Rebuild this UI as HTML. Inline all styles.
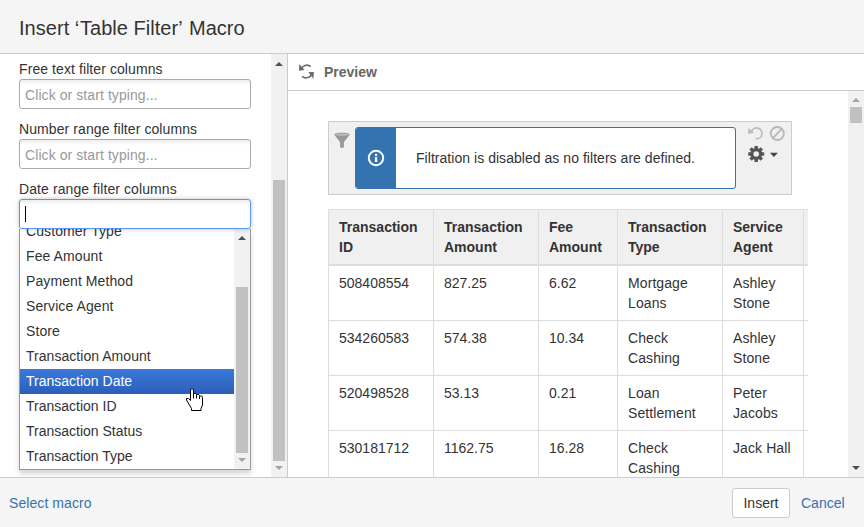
<!DOCTYPE html>
<html><head><meta charset="utf-8">
<style>
*{box-sizing:border-box;margin:0;padding:0}
html,body{width:864px;height:527px;overflow:hidden;background:#fff;font-family:"Liberation Sans",Arial,sans-serif;font-size:14px;color:#333}
#hdr{position:absolute;left:0;top:0;width:864px;height:54px;background:#f5f5f5;border-bottom:1px solid #ccc}
#hdr h2{letter-spacing:.035px;position:absolute;left:19px;top:16px;font-size:20px;font-weight:normal;color:#333;line-height:24px;white-space:nowrap}
#left{position:absolute;left:0;top:54px;width:287px;height:423px;background:#fff;overflow:hidden}
.sb{position:absolute;background:#f1f1f1}
.sb .thumb{position:absolute;left:2px;width:12px;background:#c1c1c1}
.au,.ad{position:absolute;left:4px;width:0;height:0;border-left:4px solid transparent;border-right:4px solid transparent}
.au{border-bottom:4px solid #505050}
.ad{border-top:4px solid #505050}
.au.dis{border-bottom-color:#a3a3a3}
.ad.dis{border-top-color:#a3a3a3}
label.l{position:absolute;left:19px;letter-spacing:.085px;font-size:14px;color:#333;line-height:20px;white-space:nowrap}
.inp{letter-spacing:.08px;position:absolute;left:19px;width:232px;height:30px;border:1px solid #aaa;border-radius:3px;background:linear-gradient(#eee 1%,#fff 18%);font-size:14px;color:#999;line-height:30px;padding-left:5px}
#right{position:absolute;left:287px;top:54px;width:577px;height:423px;border-left:1px solid #ccc;background:#fff;overflow:hidden}
#pvh{position:absolute;left:0;top:0;width:576px;height:37px;border-bottom:1px solid #ccc}
#pvh span{position:absolute;left:36px;top:8px;font-weight:bold;color:#666;font-size:14px;line-height:20px}
#ftr{position:absolute;left:0;top:477px;width:864px;height:50px;background:#f5f5f5;border-top:1px solid #ccc}
#ftr a{position:absolute;color:#3572b0;font-size:14px;line-height:20px;text-decoration:none}
#ins{position:absolute;left:732px;top:10px;width:58px;height:30px;border:1px solid #ccc;border-radius:3px;background:#fff;color:#333;font-size:14px;line-height:28px;text-align:center}
#dd{position:absolute;left:19px;top:175px;width:232px;height:241px;border:1px solid #999;border-top:none;background:#fff;overflow:hidden}
#ddsh{position:absolute;left:19px;top:175px;width:232px;height:241px;box-shadow:0 4px 5px rgba(0,0,0,.16)}
#dd .it{letter-spacing:.09px;position:absolute;left:0;width:214px;height:25px;line-height:25px;padding-left:6px;font-size:14px;color:#333;white-space:nowrap}
#dd .sel{background:linear-gradient(#3b79da,#2b5fb8);color:#fff}
#tblwrap{position:absolute;left:40px;top:155px;width:480px;height:268px;overflow:hidden}
table{border-collapse:collapse;table-layout:fixed;width:581px;font-size:14px;color:#333}
th,td{border:1px solid #ddd;padding:7px 10px;text-align:left;vertical-align:top;line-height:20px;height:55px;overflow:hidden;white-space:nowrap}
td:nth-child(n+4){letter-spacing:.09px}
th{background:#f0f0f0;font-weight:bold;border-bottom:2px solid #ddd;height:55px}
</style></head><body>
<div id="hdr"><h2>Insert <span style="letter-spacing:.7px">‘</span>Table Filter<span style="letter-spacing:.7px">’</span> Macro</h2></div>
<div id="left">
 <label class="l" style="top:5px">Free text filter columns</label>
 <div class="inp" style="top:25px">Click or start typing...</div>
 <label class="l" style="top:65px">Number range filter columns</label>
 <div class="inp" style="top:85px">Click or start typing...</div>
 <label class="l" style="top:125px">Date range filter columns</label>
 <div id="ddsh"></div>
 <div id="dd">
  <div class="it" style="top:-10px">Customer Type</div>
  <div class="it" style="top:15px">Fee Amount</div>
  <div class="it" style="top:40px">Payment Method</div>
  <div class="it" style="top:65px">Service Agent</div>
  <div class="it" style="top:90px">Store</div>
  <div class="it" style="top:115px;letter-spacing:.04px">Transaction Amount</div>
  <div class="it sel" style="top:140px;letter-spacing:0">Transaction Date</div>
  <div class="it" style="top:165px;letter-spacing:0">Transaction ID</div>
  <div class="it" style="top:190px;letter-spacing:0">Transaction Status</div>
  <div class="it" style="top:215px;letter-spacing:0">Transaction Type</div>
  <div class="sb" style="left:214px;top:0;width:16px;height:240px"><div class="au" style="top:7px"></div><div class="thumb" style="top:58px;height:166px"></div><div class="ad dis" style="top:229px"></div></div>
 </div>
 <div class="inp" style="top:145px;border-color:#5795f6;box-shadow:0 0 4px rgba(0,0,0,.25)"><div style="position:absolute;left:5px;top:6px;width:1px;height:16px;background:#000"></div></div>
 <div class="sb" style="left:271px;top:0;width:16px;height:423px"><div class="au" style="top:8px"></div><div class="thumb" style="top:126px;height:281px"></div><div class="ad dis" style="top:412px"></div></div>
</div>
<div id="right">
 <div id="pvh">
  <svg style="position:absolute;left:9px;top:8px" width="20" height="20" viewBox="0 0 20 20"><g fill="none" stroke="#6b6b6b" stroke-width="1.7"><path d="M3.9 7.4A6.3 6.3 0 0 1 13.7 4.5"/><path d="M5 14.3A6.3 6.3 0 0 0 15 11.4"/></g><path d="M2.3 2.1L2 8.7L7.6 8Z" fill="#6b6b6b"/><path d="M11.3 10.1H16.9L16.4 16.7Z" fill="#6b6b6b"/></svg>
  <span>Preview</span></div>
 <div class="sb" style="left:560px;top:37px;width:16px;height:386px"><div class="au dis" style="top:7px"></div><div class="thumb" style="top:16px;height:16px"></div><div class="ad" style="top:375px"></div></div>
 <div id="tf" style="position:absolute;left:40px;top:67px;width:464px;height:74px;background:#f0f0f0;border:1px solid #ccc"></div>
 <svg style="position:absolute;left:45px;top:78px" width="18" height="17" viewBox="0 0 18 17"><path d="M1.2 2.6C1.2 1.4 4.6 0.8 9 0.8S16.8 1.4 16.8 2.6L10.9 10.3V15.2Q9 16.8 7.1 15.2V10.3Z" fill="#999"/><ellipse cx="9" cy="2.6" rx="6.8" ry="1.1" fill="#bbb"/></svg>
 <div id="msg" style="position:absolute;left:67px;top:73px;width:381px;height:62px;background:#fff;border:1px solid #3572b0;border-radius:3px;overflow:hidden"><div style="position:absolute;left:0;top:0;width:40px;height:60px;background:#3572b0"></div>
  <svg style="position:absolute;left:11.4px;top:21px" width="18" height="18" viewBox="0 0 18 18"><circle cx="9" cy="9" r="7.2" fill="none" stroke="#fff" stroke-width="2"/><rect x="7.9" y="8" width="2.3" height="5" fill="#fff"/><rect x="7.9" y="4.8" width="2.3" height="2.2" fill="#fff"/></svg>
  <span style="position:absolute;left:60px;top:20px;line-height:20px;font-size:14px;white-space:nowrap;letter-spacing:.04px">Filtration is disabled as no filters are defined.</span></div>
 <svg style="position:absolute;left:458px;top:71px" width="42" height="40" viewBox="0 0 42 40">
  <path d="M5.5 6.6A5.4 5.4 0 1 1 9.7 13.7" fill="none" stroke="#bbb" stroke-width="1.7"/><path d="M2.4 2.9L2.1 9L7.9 7.8Z" fill="#bbb"/>
  <g fill="none" stroke="#b8b8b8" stroke-width="1.9"><circle cx="31.3" cy="8.5" r="6.5"/><path d="M26.9 13.2L35.7 3.8"/></g>
  <g transform="translate(10.2 29)"><circle r="4.4" fill="none" stroke="#555" stroke-width="3.2"/><g fill="#555"><rect x="-1.7" y="-8" width="3.4" height="4"/><rect x="-1.7" y="4" width="3.4" height="4"/><rect x="-8" y="-1.7" width="4" height="3.4"/><rect x="4" y="-1.7" width="4" height="3.4"/><g transform="rotate(45)"><rect x="-1.7" y="-8" width="3.4" height="4"/><rect x="-1.7" y="4" width="3.4" height="4"/><rect x="-8" y="-1.7" width="4" height="3.4"/><rect x="4" y="-1.7" width="4" height="3.4"/></g></g></g>
  <path d="M23.9 27.8H31.9L27.9 32Z" fill="#444"/>
 </svg>
 <div id="tblwrap"><table>
  <colgroup><col style="width:105px"><col style="width:105px"><col style="width:79px"><col style="width:105px"><col style="width:81px"><col style="width:106px"></colgroup>
  <tr><th>Transaction<br>ID</th><th>Transaction<br>Amount</th><th>Fee<br>Amount</th><th>Transaction<br>Type</th><th>Service<br>Agent</th><th></th></tr>
  <tr><td>508408554</td><td>827.25</td><td>6.62</td><td>Mortgage<br>Loans</td><td>Ashley<br>Stone</td><td></td></tr>
  <tr><td>534260583</td><td>574.38</td><td>10.34</td><td>Check<br>Cashing</td><td>Ashley<br>Stone</td><td></td></tr>
  <tr><td>520498528</td><td>53.13</td><td>0.21</td><td>Loan<br>Settlement</td><td>Peter<br>Jacobs</td><td></td></tr>
  <tr><td>530181712</td><td>1162.75</td><td>16.28</td><td>Check<br>Cashing</td><td>Jack Hall</td><td></td></tr>
 </table></div>
</div>
<svg style="position:absolute;left:184px;top:386.5px" width="22" height="26" viewBox="184 386 22 26"><path d="M190.5 388.8Q190.5 388 191.3 388H192.7Q193.5 388 193.5 388.8V393L194.2 392.5H195.8L196.5 393.3V393.8L197.2 393.5H198.8L199.5 394.5V395.3L200.2 395H201.8L202.5 396.5V404L201 407.5V409.5H191.5V407.5L186.5 399V397.5H188.5L190.5 399.5Z" fill="#fff" stroke="#000" stroke-width="1" stroke-linejoin="round"/><path d="M193.5 393V397.5M196.5 393.8V397.5M199.5 395.3V398" stroke="#000" stroke-width="1" fill="none"/></svg>
<div id="ftr"><a style="left:9px;top:15px;letter-spacing:.08px">Select macro</a><div id="ins">Insert</div><a style="left:801px;top:15px">Cancel</a></div>
</body></html>
